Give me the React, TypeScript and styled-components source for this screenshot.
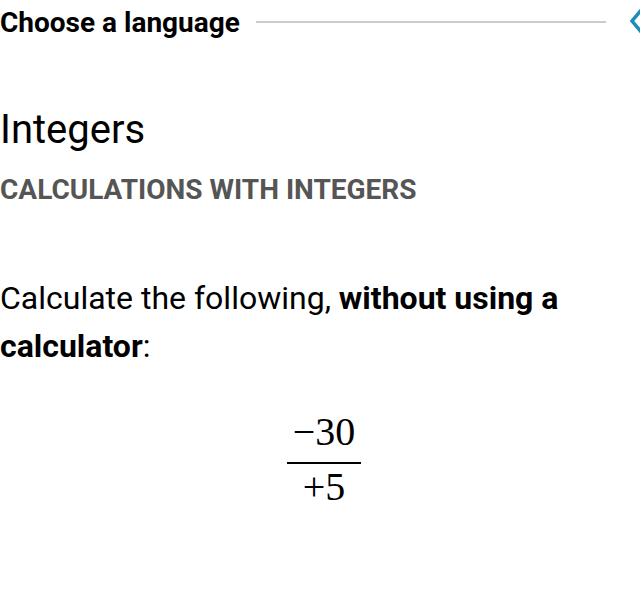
import React from "react";
import styled, { createGlobalStyle } from "styled-components";

const Global = createGlobalStyle`
  html, body { margin: 0; padding: 0; background: #fff; }
  body { font-family: Roboto, "Noto Sans", sans-serif; color: #000; overflow: hidden; }
`;

const Page = styled.div`
  width: 640px;
  height: 590px;
  overflow: hidden;
`;

const LangBar = styled.div`
  display: flex;
  align-items: center;
  height: 44px;
  margin-right: -12px;
`;

const LangTitle = styled.h2`
  margin: 0;
  font-size: 28px;
  font-weight: 700;
  white-space: nowrap;
`;

const Rule = styled.div`
  flex: 1;
  height: 2px;
  background: #cccccc;
  margin: 0 22px 0 16px;
`;

const Chevron = styled.svg`
  width: 24px;
  height: 30px;
  flex: none;
`;

const Title = styled.h1`
  margin: 62px 0 0;
  font-size: 40px;
  font-weight: 400;
  line-height: 48px;
`;

const Subtitle = styled.h3`
  margin: 19px 0 0;
  font-size: 28px;
  font-weight: 700;
  color: #555555;
  line-height: 34px;
`;

const Text = styled.p`
  margin: 67px 0 0;
  font-size: 32px;
  line-height: 48px;

  b { font-weight: 700; }
`;

const Fraction = styled.div`
  display: flex;
  flex-direction: column;
  align-items: center;
  width: 74px;
  margin: 42px 0 0 287px;
  font-family: "Liberation Serif", "DejaVu Serif", serif;
  font-size: 40px;
  line-height: 40px;
`;

const Numer = styled.span`
  padding: 0 0 10px;
`;

const Bar = styled.div`
  align-self: stretch;
  height: 2px;
  background: #000;
  margin-bottom: 3px;
`;

export default function App() {
  return (
    <Page>
      <Global />
      <LangBar>
        <LangTitle>Choose a language</LangTitle>
        <Rule />
        <Chevron viewBox="0 0 24 30">
          <path d="M14 2 L4 14 L14 26" fill="none" stroke="#1b8db8" strokeWidth="3.5" />
        </Chevron>
      </LangBar>
      <Title>Integers</Title>
      <Subtitle>CALCULATIONS WITH INTEGERS</Subtitle>
      <Text>
        Calculate the following, <b>without using a</b> <b>calculator</b>:
      </Text>
      <Fraction>
        <Numer>−30</Numer>
        <Bar />
        <span>+5</span>
      </Fraction>
    </Page>
  );
}
